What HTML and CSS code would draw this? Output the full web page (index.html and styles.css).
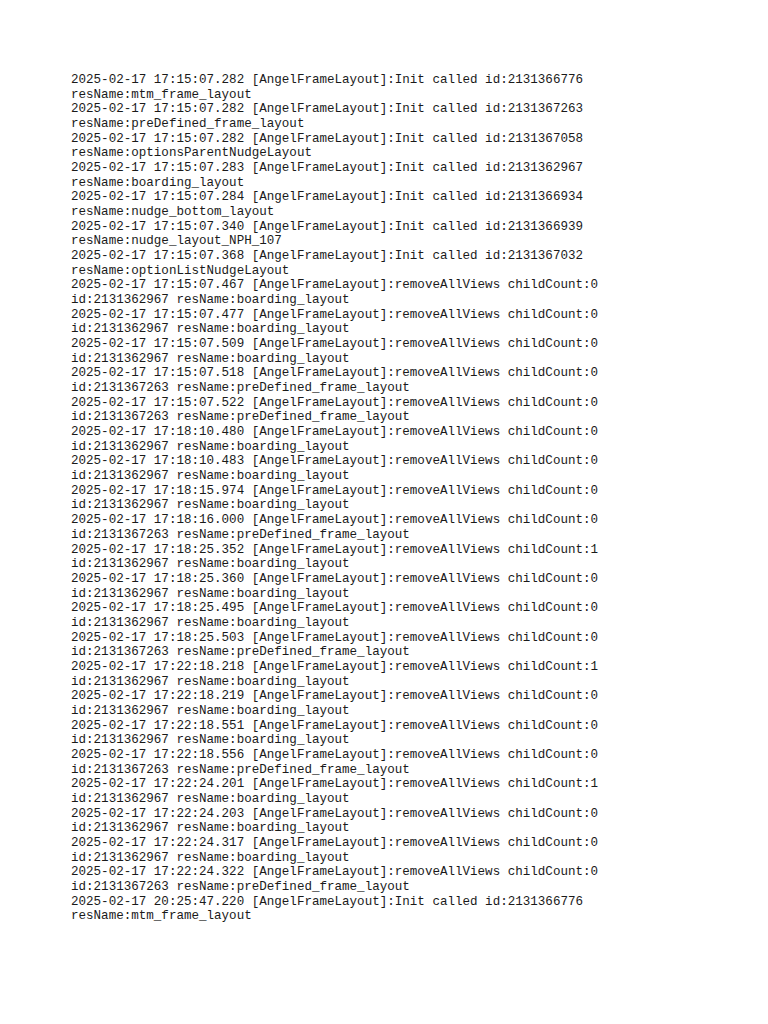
FILE: index.html
```html
<!DOCTYPE html>
<html>
<head>
<meta charset="utf-8">
<link rel="stylesheet" href="styles.css">
</head>
<body>
<div class="page">
<pre class="log">2025-02-17 17:15:07.282 [AngelFrameLayout]:Init called id:2131366776
resName:mtm_frame_layout
2025-02-17 17:15:07.282 [AngelFrameLayout]:Init called id:2131367263
resName:preDefined_frame_layout
2025-02-17 17:15:07.282 [AngelFrameLayout]:Init called id:2131367058
resName:optionsParentNudgeLayout
2025-02-17 17:15:07.283 [AngelFrameLayout]:Init called id:2131362967
resName:boarding_layout
2025-02-17 17:15:07.284 [AngelFrameLayout]:Init called id:2131366934
resName:nudge_bottom_layout
2025-02-17 17:15:07.340 [AngelFrameLayout]:Init called id:2131366939
resName:nudge_layout_NPH_107
2025-02-17 17:15:07.368 [AngelFrameLayout]:Init called id:2131367032
resName:optionListNudgeLayout
2025-02-17 17:15:07.467 [AngelFrameLayout]:removeAllViews childCount:0
id:2131362967 resName:boarding_layout
2025-02-17 17:15:07.477 [AngelFrameLayout]:removeAllViews childCount:0
id:2131362967 resName:boarding_layout
2025-02-17 17:15:07.509 [AngelFrameLayout]:removeAllViews childCount:0
id:2131362967 resName:boarding_layout
2025-02-17 17:15:07.518 [AngelFrameLayout]:removeAllViews childCount:0
id:2131367263 resName:preDefined_frame_layout
2025-02-17 17:15:07.522 [AngelFrameLayout]:removeAllViews childCount:0
id:2131367263 resName:preDefined_frame_layout
2025-02-17 17:18:10.480 [AngelFrameLayout]:removeAllViews childCount:0
id:2131362967 resName:boarding_layout
2025-02-17 17:18:10.483 [AngelFrameLayout]:removeAllViews childCount:0
id:2131362967 resName:boarding_layout
2025-02-17 17:18:15.974 [AngelFrameLayout]:removeAllViews childCount:0
id:2131362967 resName:boarding_layout
2025-02-17 17:18:16.000 [AngelFrameLayout]:removeAllViews childCount:0
id:2131367263 resName:preDefined_frame_layout
2025-02-17 17:18:25.352 [AngelFrameLayout]:removeAllViews childCount:1
id:2131362967 resName:boarding_layout
2025-02-17 17:18:25.360 [AngelFrameLayout]:removeAllViews childCount:0
id:2131362967 resName:boarding_layout
2025-02-17 17:18:25.495 [AngelFrameLayout]:removeAllViews childCount:0
id:2131362967 resName:boarding_layout
2025-02-17 17:18:25.503 [AngelFrameLayout]:removeAllViews childCount:0
id:2131367263 resName:preDefined_frame_layout
2025-02-17 17:22:18.218 [AngelFrameLayout]:removeAllViews childCount:1
id:2131362967 resName:boarding_layout
2025-02-17 17:22:18.219 [AngelFrameLayout]:removeAllViews childCount:0
id:2131362967 resName:boarding_layout
2025-02-17 17:22:18.551 [AngelFrameLayout]:removeAllViews childCount:0
id:2131362967 resName:boarding_layout
2025-02-17 17:22:18.556 [AngelFrameLayout]:removeAllViews childCount:0
id:2131367263 resName:preDefined_frame_layout
2025-02-17 17:22:24.201 [AngelFrameLayout]:removeAllViews childCount:1
id:2131362967 resName:boarding_layout
2025-02-17 17:22:24.203 [AngelFrameLayout]:removeAllViews childCount:0
id:2131362967 resName:boarding_layout
2025-02-17 17:22:24.317 [AngelFrameLayout]:removeAllViews childCount:0
id:2131362967 resName:boarding_layout
2025-02-17 17:22:24.322 [AngelFrameLayout]:removeAllViews childCount:0
id:2131367263 resName:preDefined_frame_layout
2025-02-17 20:25:47.220 [AngelFrameLayout]:Init called id:2131366776
resName:mtm_frame_layout</pre>
</div>
</body>
</html>
```

FILE: styles.css
```css
html, body {
  margin: 0;
  padding: 0;
  background: #ffffff;
}

.page {
  width: 768px;
  height: 1024px;
  box-sizing: border-box;
  padding: 73px 0 0 71px;
}

.log {
  margin: 0;
  font-family: "Liberation Mono", "DejaVu Sans Mono", monospace;
  font-size: 12.55px;
  line-height: 14.67px;
  color: #1a1a1a;
  white-space: pre;
}
```
